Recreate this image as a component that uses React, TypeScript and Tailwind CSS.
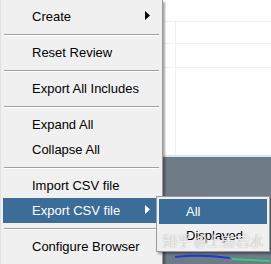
import { Fragment } from "react";

type Entry = { label?: string; sub?: boolean; active?: boolean; sep?: boolean };

const entries: Entry[] = [
  { label: "Create", sub: true },
  { sep: true },
  { label: "Reset Review" },
  { sep: true },
  { label: "Export All Includes" },
  { sep: true },
  { label: "Expand All" },
  { label: "Collapse All" },
  { sep: true },
  { label: "Import CSV file" },
  { label: "Export CSV file", sub: true, active: true },
  { sep: true },
  { label: "Configure Browser" },
];

const Arrow = ({ color }: { color: string }) => (
  <svg width="5" height="9" viewBox="0 0 5 9" className="absolute right-[10px] top-[7px]">
    <path d="M0 0 L5 4.5 L0 9 Z" fill={color} />
  </svg>
);

export default function App() {
  return (
    <div className="relative w-[271px] h-[264px] overflow-hidden bg-white font-['Liberation_Sans',Arial,sans-serif] text-[13px]">
      {/* background window */}
      <div className="absolute inset-0 flex flex-col">
        <div className="h-[155px] bg-white relative">
          <div className="h-[22px] border-b border-[#eef2f2]" />
          <div className="h-[22px] border-b border-[#eef2f2]" />
          <div className="h-[24px] border-b border-[#eef2f2]" />
          <div className="absolute left-[175px] top-[22px] bottom-0 border-l border-[#f0f2f2]" />
        </div>
        <div className="h-[2px] bg-[#d6e6f2]" />
        <div className="flex-1 bg-[#6f7b86] relative">
          <svg width="271" height="110" className="absolute left-0 top-0">
            <path d="M175 100 Q200 97 230 101" stroke="#1a3bd8" strokeWidth="2" fill="none" />
            <path d="M232 102 L270 104" stroke="#2fd07a" strokeWidth="2" fill="none" />
          </svg>
        </div>
      </div>

      {/* main context menu */}
      <div className="absolute left-0 top-0 w-[163px] h-[266px] bg-[#f0f0f0] border-l border-l-[#e0e0e0] border-r border-r-[#9a9a9a] shadow-[2px_2px_2px_rgba(0,0,0,0.35)] pt-[4px] px-[2px]">
        {entries.map((e, i) => (
          <Fragment key={i}>
            {e.sep ? (
              <div className="h-[11px] flex flex-col justify-center px-[1px]">
                <div className="h-[1px] bg-[#a0a0a0]" />
                <div className="h-[1px] bg-white" />
              </div>
            ) : (
              <div
                className={`relative h-[25px] leading-[25px] pl-[29px] ${
                  e.active ? "bg-[#3b6d98] text-white" : "text-black"
                }`}
              >
                {e.label}
                {e.sub && <Arrow color={e.active ? "#ffffff" : "#000000"} />}
              </div>
            )}
          </Fragment>
        ))}
      </div>

      {/* submenu */}
      <div className="absolute left-[156px] top-[196px] w-[114px] h-[56px] bg-[#f0f0f0] border border-[#9a9a9a] shadow-[2px_2px_2px_rgba(0,0,0,0.35)] p-[2px]">
        <div className="h-[25px] leading-[25px] pl-[27px] bg-[#3b6d98] text-white">All</div>
        <div className="h-[25px] leading-[23px] pl-[27px] text-black">Displayed</div>
      </div>

      {/* watermark */}
      <div className="absolute left-[163px] top-[230px] text-[14px] text-white/85 font-['Noto_Sans_CJK_SC',sans-serif] [text-shadow:0_0_1px_rgba(90,90,90,0.7)]">
        知乎 @上善若水
      </div>
    </div>
  );
}
